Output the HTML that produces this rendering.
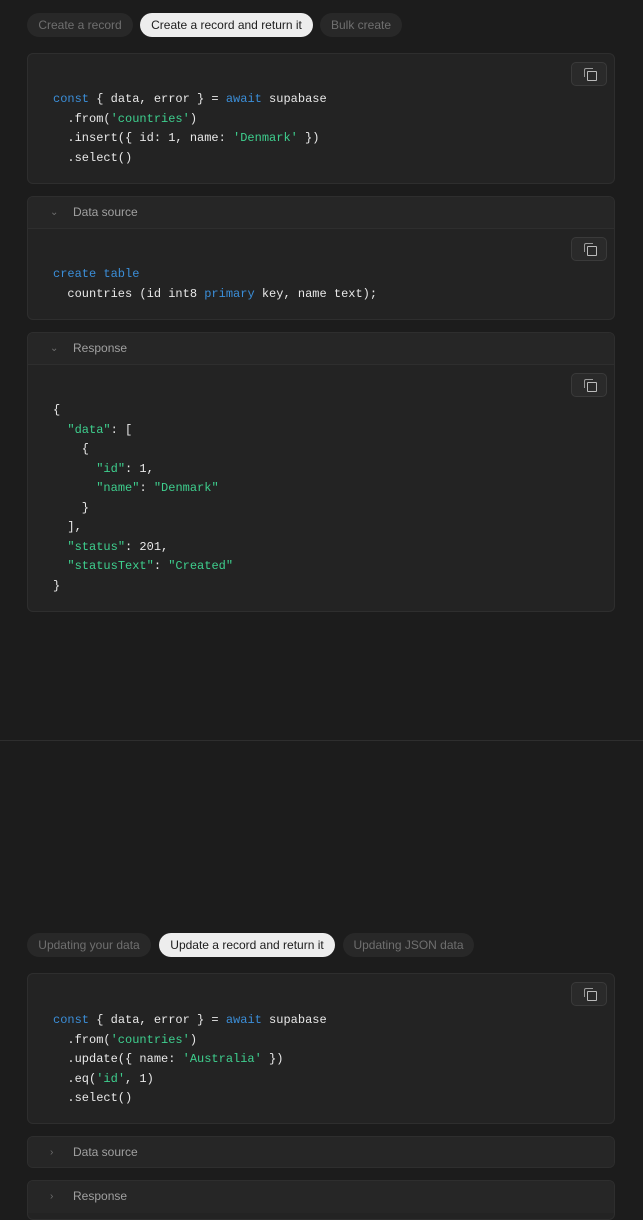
<!DOCTYPE html>
<html><head><meta charset="utf-8"><style>
*{margin:0;padding:0;box-sizing:border-box}
body{width:643px;height:1194px;background:#1c1c1c;position:relative;overflow:hidden;font-family:"Liberation Sans",sans-serif}
.tab{position:absolute;height:24px;border-radius:12px;background:#282828;color:#6f6f6f;font-size:12px;line-height:24px;text-align:center}
.tab.on{background:#ededed;color:#1c1c1c}
.box{position:absolute;left:27px;width:588px;background:#232323;border:1px solid #2e2e2e;border-radius:6px;overflow:hidden}
.hdr{height:32px;border-bottom:1px solid #2e2e2e;background:#262626;color:#a0a0a0;font-size:12px;line-height:31px;padding-left:45px;position:relative}
.hdr .chev{position:absolute;left:22px;top:0;color:#707070;font-size:10px}
.copy{position:absolute;right:7px;width:36px;height:24px;border:1px solid #3a3a3a;background:#2a2a2a;border-radius:5px}
.copy:before{content:"";position:absolute;left:12px;top:5px;width:8px;height:8px;border:1.3px solid #9a9a9a;border-right:none;border-bottom:none;border-radius:2px 0 0 0}
.copy:after{content:"";position:absolute;left:15px;top:8px;width:8px;height:8px;border:1.3px solid #bbb;border-radius:1px}
pre{position:absolute;left:25px;font-family:"Liberation Mono",monospace;font-size:12px;line-height:19.5px;color:#e8e8e8}
.k{color:#3b8ed8}.s{color:#3ecf8e}
</style></head><body>
<div class="tab" style="left:27px;top:13px;width:106px">Create a record</div>
<div class="tab on" style="left:140px;top:13px;width:173px">Create a record and return it</div>
<div class="tab" style="left:320px;top:13px;width:82px">Bulk create</div>

<div class="box" style="top:53px;height:131px">
<div class="copy" style="top:8px"></div>
<pre style="top:36px"><span class="k">const</span> { data, error } = <span class="k">await</span> supabase
  .from(<span class="s">'countries'</span>)
  .insert({ id: 1, name: <span class="s">'Denmark'</span> })
  .select()</pre>
</div>

<div class="box" style="top:196px;height:124px">
<div class="hdr"><span class="chev">⌄</span>Data source</div>
<div class="copy" style="top:40px"></div>
<pre style="top:68px"><span class="k">create table</span>
  countries (id int8 <span class="k">primary</span> key, name text);</pre>
</div>

<div class="box" style="top:332px;height:280px">
<div class="hdr"><span class="chev">⌄</span>Response</div>
<div class="copy" style="top:40px"></div>
<pre style="top:68px">{
  <span class="s">"data"</span>: [
    {
      <span class="s">"id"</span>: 1,
      <span class="s">"name"</span>: <span class="s">"Denmark"</span>
    }
  ],
  <span class="s">"status"</span>: 201,
  <span class="s">"statusText"</span>: <span class="s">"Created"</span>
}</pre>
</div>

<div style="position:absolute;left:0;top:740px;width:643px;height:1px;background:#2e2e2e"></div>

<div class="tab" style="left:27px;top:933px;width:124px">Updating your data</div>
<div class="tab on" style="left:159px;top:933px;width:176px">Update a record and return it</div>
<div class="tab" style="left:343px;top:933px;width:131px">Updating JSON data</div>

<div class="box" style="top:973px;height:151px">
<div class="copy" style="top:8px"></div>
<pre style="top:37px"><span class="k">const</span> { data, error } = <span class="k">await</span> supabase
  .from(<span class="s">'countries'</span>)
  .update({ name: <span class="s">'Australia'</span> })
  .eq(<span class="s">'id'</span>, 1)
  .select()</pre>
</div>

<div class="box" style="top:1136px;height:32px"><div class="hdr" style="border:none"><span class="chev">›</span>Data source</div></div>
<div class="box" style="top:1180px;height:40px"><div class="hdr" style="border:none"><span class="chev">›</span>Response</div></div>
</body></html>
